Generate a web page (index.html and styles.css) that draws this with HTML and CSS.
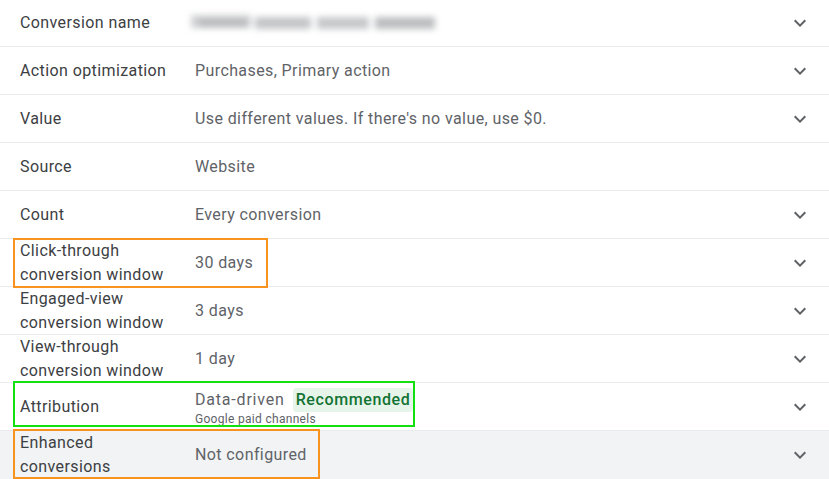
FILE: index.html
```html
<!DOCTYPE html>
<html>
<head>
<meta charset="utf-8">
<link rel="stylesheet" href="styles.css">
</head>
<body>
<div class="list">
  <div class="row">
    <div class="label">Conversion name</div>
    <div class="value"><div class="blur"><span class="b1"></span><span class="b2"></span><span class="b3"></span><span class="b4"></span><span class="b5"></span></div></div>
    <svg class="chev" viewBox="0 0 24 24"><path d="M16.59 8.59L12 13.17 7.41 8.59 6 10l6 6 6-6z"/></svg>
  </div>
  <div class="row">
    <div class="label">Action optimization</div>
    <div class="value">Purchases, Primary action</div>
    <svg class="chev" viewBox="0 0 24 24"><path d="M16.59 8.59L12 13.17 7.41 8.59 6 10l6 6 6-6z"/></svg>
  </div>
  <div class="row">
    <div class="label">Value</div>
    <div class="value">Use different values. If there's no value, use $0.</div>
    <svg class="chev" viewBox="0 0 24 24"><path d="M16.59 8.59L12 13.17 7.41 8.59 6 10l6 6 6-6z"/></svg>
  </div>
  <div class="row">
    <div class="label">Source</div>
    <div class="value">Website</div>
  </div>
  <div class="row">
    <div class="label">Count</div>
    <div class="value">Every conversion</div>
    <svg class="chev" viewBox="0 0 24 24"><path d="M16.59 8.59L12 13.17 7.41 8.59 6 10l6 6 6-6z"/></svg>
  </div>
  <div class="row">
    <div class="label">Click-through<br>conversion window</div>
    <div class="value">30 days</div>
    <svg class="chev" viewBox="0 0 24 24"><path d="M16.59 8.59L12 13.17 7.41 8.59 6 10l6 6 6-6z"/></svg>
    <span class="mark orange mark-click"></span>
  </div>
  <div class="row">
    <div class="label">Engaged-view<br>conversion window</div>
    <div class="value">3 days</div>
    <svg class="chev" viewBox="0 0 24 24"><path d="M16.59 8.59L12 13.17 7.41 8.59 6 10l6 6 6-6z"/></svg>
  </div>
  <div class="row">
    <div class="label">View-through<br>conversion window</div>
    <div class="value">1 day</div>
    <svg class="chev" viewBox="0 0 24 24"><path d="M16.59 8.59L12 13.17 7.41 8.59 6 10l6 6 6-6z"/></svg>
  </div>
  <div class="row">
    <div class="label">Attribution</div>
    <div class="value attr">
      <div class="attr-top"><span class="dd">Data-driven</span><span class="badge">Recommended</span></div>
      <div class="sub">Google paid channels</div>
    </div>
    <svg class="chev" viewBox="0 0 24 24"><path d="M16.59 8.59L12 13.17 7.41 8.59 6 10l6 6 6-6z"/></svg>
    <span class="mark green mark-attr"></span>
  </div>
  <div class="row gray">
    <div class="label">Enhanced<br>conversions</div>
    <div class="value">Not configured</div>
    <svg class="chev" viewBox="0 0 24 24"><path d="M16.59 8.59L12 13.17 7.41 8.59 6 10l6 6 6-6z"/></svg>
    <span class="mark orange mark-enh"></span>
  </div>
</div>
</body>
</html>
```
FILE: styles.css
```css
html, body {
  margin: 0;
  padding: 0;
  background: #ffffff;
  overflow: hidden;
}
body {
  font-family: Roboto, "Liberation Sans", Arial, sans-serif;
  font-size: 16px;
  letter-spacing: 0.4px;
  color: #3c4043;
}
.list {
  margin-top: -1px;
}
.row {
  position: relative;
  display: flex;
  align-items: center;
  height: 47px;
  border-bottom: 1px solid #e8eaed;
  padding-left: 20px;
}
.row.gray {
  background: #f1f3f4;
  border-bottom: none;
  height: 48px;
}
.label {
  width: 175px;
  flex: none;
  line-height: 24px;
  color: #3c4043;
}
.value {
  flex: 1;
  color: #5f6368;
  line-height: 20px;
}
.chev {
  width: 24px;
  height: 24px;
  fill: #5f6368;
  flex: none;
  margin-right: 17px;
}
.blur {
  position: relative;
  width: 250px;
  height: 22px;
  margin-left: -6px;
  filter: blur(3px);
}
.blur span {
  position: absolute;
  top: 5px;
  height: 12px;
  background: #bfc1c3;
}
.blur .b1 { left: 2px; width: 60px; top: 3px; height: 13px; background: #d0d2d4; }
.blur .b2 { left: 10px; width: 48px; background: #b8babc; top: 7px; height: 8px; }
.blur .b3 { left: 66px; width: 56px; background: #c4c6c8; }
.blur .b4 { left: 128px; width: 52px; background: #c6c8ca; }
.blur .b5 { left: 186px; width: 60px; background: #bcbec0; }
.attr-top {
  display: flex;
  align-items: center;
  gap: 8px;
  height: 24px;
}
.dd {
  letter-spacing: 0.8px;
}
.badge {
  background: #e6f4ea;
  color: #137333;
  font-weight: 500;
  letter-spacing: 0.6px;
  padding: 2px 3px;
  border-radius: 4px;
  line-height: 20px;
}
.sub {
  font-size: 12px;
  line-height: 14px;
  color: #5f6368;
  letter-spacing: 0.3px;
}
.mark {
  position: absolute;
  box-sizing: border-box;
  border: 2px solid;
  pointer-events: none;
}
.orange { border-color: #f7931e; }
.green { border-color: #12e012; }
.mark-click {
  left: 13px;
  top: -1px;
  width: 255px;
  height: 50px;
}
.mark-attr {
  left: 13px;
  top: -2px;
  width: 402px;
  height: 46px;
}
.mark-enh {
  left: 13px;
  top: -2px;
  width: 307px;
  height: 50px;
}
```
